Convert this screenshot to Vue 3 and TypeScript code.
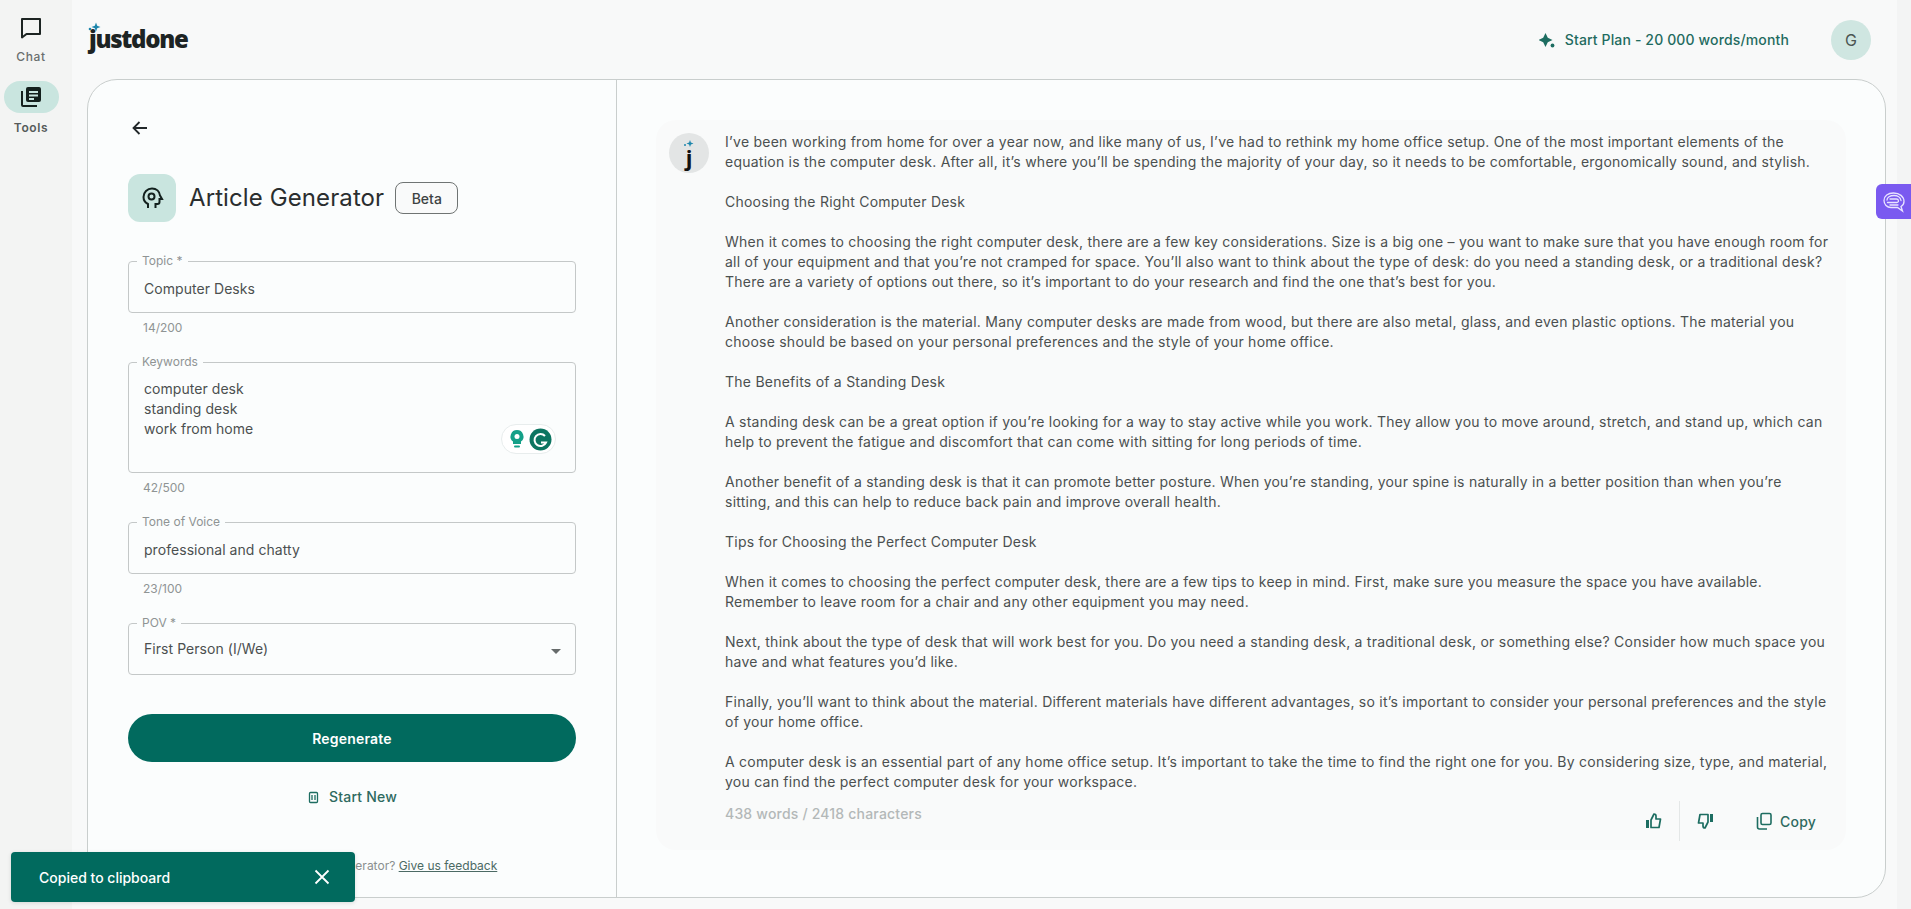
<script setup lang="ts">
const paragraphs: string[] = [
  'I’ve been working from home for over a year now, and like many of us, I’ve had to rethink my home office setup. One of the most important elements of the equation is the computer desk. After all, it’s where you’ll be spending the majority of your day, so it needs to be comfortable, ergonomically sound, and stylish.',
  'Choosing the Right Computer Desk',
  'When it comes to choosing the right computer desk, there are a few key considerations. Size is a big one – you want to make sure that you have enough room for all of your equipment and that you’re not cramped for space. You’ll also want to think about the type of desk: do you need a standing desk, or a traditional desk? There are a variety of options out there, so it’s important to do your research and find the one that’s best for you.',
  'Another consideration is the material. Many computer desks are made from wood, but there are also metal, glass, and even plastic options. The material you choose should be based on your personal preferences and the style of your home office.',
  'The Benefits of a Standing Desk',
  'A standing desk can be a great option if you’re looking for a way to stay active while you work. They allow you to move around, stretch, and stand up, which can help to prevent the fatigue and discomfort that can come with sitting for long periods of time.',
  'Another benefit of a standing desk is that it can promote better posture. When you’re standing, your spine is naturally in a better position than when you’re sitting, and this can help to reduce back pain and improve overall health.',
  'Tips for Choosing the Perfect Computer Desk',
  'When it comes to choosing the perfect computer desk, there are a few tips to keep in mind. First, make sure you measure the space you have available. Remember to leave room for a chair and any other equipment you may need.',
  'Next, think about the type of desk that will work best for you. Do you need a standing desk, a traditional desk, or something else? Consider how much space you have and what features you’d like.',
  'Finally, you’ll want to think about the material. Different materials have different advantages, so it’s important to consider your personal preferences and the style of your home office.',
  'A computer desk is an essential part of any home office setup. It’s important to take the time to find the right one for you. By considering size, type, and material, you can find the perfect computer desk for your workspace.',
]
</script>

<template>
  <div class="app">
    <nav class="rail">
      <div class="rail-item">
        <span class="rail-icon">
          <svg width="24" height="24" viewBox="0 0 24 24" fill="none" stroke="#1c2422" stroke-width="2" stroke-linejoin="round"><path d="M3 3h18v15H7.500L3 21.500z" /></svg>
        </span>
        <span class="rail-label">Chat</span>
      </div>
      <div class="rail-item tools">
        <span class="rail-icon active">
          <svg width="24" height="24" viewBox="0 0 24 24"><path fill="#14201d" d="M9 2h11a2 2 0 0 1 2 2v11a2 2 0 0 1-2 2H9a2 2 0 0 1-2-2V4a2 2 0 0 1 2-2z" /><path fill="#c9e5df" d="M10 6h9v2h-9zM10 9.500h9v2h-9zM10 13h5v2h-5z" /><path fill="none" stroke="#14201d" stroke-width="2" d="M3 6v14a1 1 0 0 0 1 1h14" /></svg>
        </span>
        <span class="rail-label strong">Tools</span>
      </div>
    </nav>

    <main class="main">
      <header class="top">
        <div class="logo">
          <svg class="spark" width="14" height="14" viewBox="0 0 14 14"><path fill="#1d86ac" d="M8 0.500l1.200 3.300 3.300 1.200-3.300 1.200L8 9.500 6.800 6.200 3.500 5l3.300-1.200z" /><circle cx="2" cy="7" r="1.300" fill="#1d86ac" /></svg>
          <span>justdone</span>
        </div>
        <div class="plan">
          <svg width="16" height="16" viewBox="0 0 16 16" fill="#1d6d61"><path d="M6.500 1l2.300 4.700 4.700 2.300-4.700 2.300-2.300 4.700-2.300-4.700L-.5 8l4.700-2.300z" /><circle cx="13.500" cy="13.500" r="1.900" /></svg>
          <span>Start Plan - 20 000 words/month</span>
        </div>
        <div class="avatar">G</div>
      </header>

      <section class="card">
        <aside class="form">
          <svg class="back" width="18" height="18" viewBox="0 0 18 18" fill="none" stroke="#22282a" stroke-width="1.800"><path d="M16 9H2.500M8.500 3 2.500 9l6 6" /></svg>

          <div class="title-row">
            <span class="tile">
              <svg width="24" height="24" viewBox="0 0 24 24" fill="none" stroke="#13211e" stroke-width="2"><path d="M8 22v-4C5 16.500 3.500 14 3.500 11A8.500 8.500 0 0 1 12 2.500c4.500 0 7.500 3 8 7l2 3.500h-2.500v3a2 2 0 0 1-2 2h-2v4" /><circle cx="11.500" cy="10.500" r="3" /></svg>
            </span>
            <h1>Article Generator</h1>
            <span class="beta">Beta</span>
          </div>

          <fieldset class="field">
            <legend>Topic *</legend>
            <div class="value">Computer Desks</div>
          </fieldset>
          <div class="count">14/200</div>

          <fieldset class="field tall">
            <legend>Keywords</legend>
            <div class="value">computer desk<br />standing desk<br />work from home</div>
            <span class="assist">
              <svg width="18" height="20" viewBox="0 0 18 20"><path fill="#14a088" d="M9 1a6.500 6.500 0 0 1 4 11.600V15H5v-2.400A6.500 6.500 0 0 1 9 1z" /><rect x="6" y="16.500" width="6" height="2" rx="1" fill="#14a088" /><circle cx="9" cy="7.500" r="2.500" fill="#fff" /></svg>
              <svg width="23" height="23" viewBox="0 0 23 23"><circle cx="11.500" cy="11.500" r="11" fill="#0c7561" /><path fill="none" stroke="#fff" stroke-width="2" d="M16 8a6 6 0 1 0 1 6.500h-5" /></svg>
            </span>
          </fieldset>
          <div class="count">42/500</div>

          <fieldset class="field">
            <legend>Tone of Voice</legend>
            <div class="value">professional and chatty</div>
          </fieldset>
          <div class="count">23/100</div>

          <fieldset class="field select">
            <legend>POV *</legend>
            <div class="value">First Person (I/We)</div>
            <span class="caret"></span>
          </fieldset>

          <button class="primary" type="button">Regenerate</button>

          <div class="start-new">
            <svg width="13" height="13" viewBox="0 0 13 13" fill="none" stroke="#1d6d61" stroke-width="1.300"><rect x="2.500" y="1.500" width="8" height="10" rx="1" /><path d="M5 4v5M8 4v5" /></svg>
            <span>Start New</span>
          </div>

          <p class="feedback">Do you enjoy our Article Generator? <a>Give us feedback</a></p>
        </aside>

        <section class="output">
          <article class="bubble">
            <span class="bot">
              <svg width="12" height="10" viewBox="0 0 12 10" class="bot-spark"><path fill="#1d86ac" d="M7 0l.9 2.600 2.600.9-2.600.9L7 7l-.9-2.600-2.600-.9 2.600-.9z" /><circle cx="2" cy="5" r="1" fill="#1d86ac" /></svg>
              <span>j</span>
            </span>
            <div class="copy-body">
              <p v-for="(text, index) in paragraphs" :key="index">{{ text }}</p>
              <div class="stats">438 words / 2418 characters</div>
            </div>
            <div class="actions">
              <svg width="18" height="18" viewBox="0 0 18 18" fill="none" stroke="#1d6d61" stroke-width="1.700"><path fill="#1d6d61" stroke="none" d="M1 8h3v8H1z" /><path d="M6 8l3-6c1.500 0 2 1 2 2v3h4.500l-1.500 8.500H6z" stroke-linejoin="round" /></svg>
              <i class="sep"></i>
              <svg width="18" height="18" viewBox="0 0 18 18" fill="none" stroke="#1d6d61" stroke-width="1.700"><path fill="#1d6d61" stroke="none" d="M14 2h3v8h-3z" /><path d="M12 10l-3 6c-1.500 0-2-1-2-2v-3H2.500L4 2.500h8z" stroke-linejoin="round" /></svg>
              <span class="copy">
                <svg width="16" height="18" viewBox="0 0 16 18" fill="none" stroke="#1d6d61" stroke-width="1.600"><rect x="5" y="1.500" width="10" height="11" rx="1.500" /><path d="M1.500 5v10a2 2 0 0 0 2 2H11" /></svg>
                <span>Copy</span>
              </span>
            </div>
          </article>
        </section>
      </section>
    </main>

    <div class="strip"></div>

    <div class="side-tab">
      <svg width="24" height="22" viewBox="0 0 24 22" fill="none" stroke="#e9e4ff" stroke-width="1.300" stroke-linecap="round"><path d="M2 9.500C2 5 6 2 11.500 2 17.500 2 22 5.500 22 10.500c0 2.500-1 4-3 5l1.500 4.500-5-3.500H9C5 16.500 2 13.500 2 9.500z" /><path d="M5 9c0-2.500 3-4.500 7-4.500 3.500 0 6.500 2 7 5M5.500 11.500H15c2 0 2-3.500-.500-3.500H8M8 14h8" /></svg>
    </div>

    <div class="toast">
      <span>Copied to clipboard</span>
      <svg width="16" height="16" viewBox="0 0 16 16" stroke="#fff" stroke-width="1.800"><path d="M1.500 1.500l13 13M14.500 1.500l-13 13" /></svg>
    </div>
  </div>
</template>

<style>
html, body { margin: 0; height: 100%; overflow: hidden; }
</style>

<style scoped>
.app {
  display: grid;
  grid-template-columns: 72px 1fr 14px;
  height: 909px;
  font-family: Inter, "Liberation Sans", sans-serif;
  font-size: 14px;
  color: #4b5050;
  background: #f8f9f9;
}
.rail { background: #f3f4f3; display: flex; flex-direction: column; align-items: center; padding: 12px 10px 0 0; }
.strip { background: #f3f4f4; }
.rail-item { display: flex; flex-direction: column; align-items: center; }
.rail-item.tools { margin-top: 16px; }
.rail-icon { width: 55px; height: 32px; display: flex; align-items: center; justify-content: center; border-radius: 16px; }
.rail-icon.active { background: #c9e5df; }
.rail-label { font-size: 12px; line-height: 16px; margin-top: 5px; color: #6a6f6e; letter-spacing: 0.6px; font-weight: 500; }
.tools .rail-label { margin-top: 7px; }
.rail-label.strong { font-weight: 600; color: #565b5a; }

.main { padding: 0 11px 0 15px; display: flex; flex-direction: column; min-width: 0; }
.top { height: 79px; flex: none; display: flex; align-items: center; }
.logo {
  position: relative;
  font-family: "Open Sans", sans-serif;
  font-weight: 800;
  font-size: 24px;
  letter-spacing: -1.300px;
  color: #1d2424;
  margin: 1px auto 0 2px;
  padding-bottom: 3px;
}
.spark { position: absolute; left: -1px; top: 0; }
.plan { display: flex; align-items: center; gap: 10px; color: #1f6b60; font-weight: 500; font-size: 14px; letter-spacing: 0.14px; margin-right: 42px; }
.avatar { width: 40px; height: 40px; border-radius: 50%; background: #cfe6e1; color: #4b5553; display: flex; align-items: center; justify-content: center; font-size: 16px; margin-right: 15px; }

.card {
  height: 819px;
  box-sizing: border-box;
  display: grid;
  grid-template-columns: 529px 1fr;
  border: 1px solid #c9cecd;
  border-radius: 30px;
  background: #fbfdfd;
}
.form { padding: 39px 40px 0; border-right: 1px solid #c9cecd; min-width: 0; }
.back { display: block; margin-left: 3px; }
.title-row { display: flex; align-items: center; margin-top: 37px; }
.tile { width: 48px; height: 48px; border-radius: 12px; background: #c9e5df; display: flex; align-items: center; justify-content: center; }
h1 { margin: 0 0 0 13px; font-size: 24px; font-weight: 400; line-height: 32px; color: #2a2e2f; letter-spacing: 0.1px; }
.beta { margin-left: 11px; width: 63px; height: 32px; box-sizing: border-box; border: 1px solid #6f7473; border-radius: 8px; display: flex; align-items: center; justify-content: center; color: #3d4242; font-weight: 500; font-size: 14px; background: #f9fafa; }

.field { position: relative; margin: 32px 0 0; padding: 0 15px; height: 59px; box-sizing: border-box; border: 1px solid #c4c8c8; border-radius: 4px; min-width: 0; }
.count + .field { margin-top: 19px; }
.title-row + .field { margin-top: 32px; }
.field.tall { height: 118px; }
.field legend { font-size: 12px; line-height: 14px; padding: 0 5px; margin-left: -7px; color: #8f9494; }
.value { font-size: 14px; line-height: 20px; letter-spacing: 0.05px; color: #4b5050; padding-top: 11px; }
.tall .value { padding-top: 10px; }
.select .value { padding-top: 9px; }
.count { font-size: 12px; line-height: 16px; color: #8f9494; margin: 7px 0 0 15px; }
.assist { position: absolute; right: 19px; top: 55px; width: 55px; height: 30px; box-sizing: border-box; border: 1px solid #e8eded; border-radius: 15px; background: #fff; display: flex; align-items: center; justify-content: space-between; padding: 0 3px 0 6px; }
.caret { position: absolute; right: 14px; top: 19px; border-left: 5px solid transparent; border-right: 5px solid transparent; border-top: 5px solid #666b6b; }

.primary { display: block; width: 100%; height: 48px; margin-top: 39px; border: 0; border-radius: 24px; background: #016a5e; color: #fff; font: 600 14px Inter, sans-serif; letter-spacing: 0.2px; }
.start-new { display: flex; align-items: center; justify-content: center; gap: 9px; margin-top: 25px; line-height: 20px; color: #2e6a60; font-weight: 500; letter-spacing: 0.2px; }
.feedback { margin: 51px 0 0; padding-right: 14px; font-size: 12px; line-height: 16px; color: #8a8f8f; text-align: center; white-space: nowrap; }
.feedback a { color: #4b6a64; text-decoration: underline; }

.output { padding: 40px 39px 0 39px; min-width: 0; }
.bubble { position: relative; display: grid; grid-template-columns: 40px 1fr; column-gap: 16px; height: 730px; box-sizing: border-box; padding: 13px 15.500px 0 13px; border-radius: 20px; background: #f9fafa; }
.bot { position: relative; width: 40px; height: 40px; border-radius: 50%; background: #e3e5e5; display: flex; align-items: flex-end; justify-content: center; font: 700 22px "Open Sans", sans-serif; color: #111; line-height: 32px; }
.bot-spark { position: absolute; left: 14px; top: 7px; }
.copy-body p { margin: 0 0 20px; line-height: 20px; letter-spacing: 0.24px; color: #4b5050; }
.copy-body { margin-top: -1px; }
.stats { margin-top: -8px; font-weight: 500; color: #b3b8b8; line-height: 20px; letter-spacing: 0.2px; }
.actions { position: absolute; right: 30px; bottom: 9px; display: flex; align-items: center; color: #2e6a60; }
.sep { width: 1px; height: 40px; background: #e4e7e7; margin: 0 16px; }
.copy { display: flex; align-items: center; gap: 8px; margin-left: 42px; font-weight: 500; letter-spacing: 0.2px; }

.side-tab { position: absolute; left: 1876px; top: 184px; width: 35px; height: 35px; border-radius: 6px 0 0 6px; background: #7a5af0; display: flex; align-items: center; justify-content: center; }
.toast { position: absolute; left: 11px; top: 852px; width: 344px; height: 50px; box-sizing: border-box; padding: 0 25px 0 28px; border-radius: 4px; background: #016a5e; color: #fff; font-weight: 500; display: flex; align-items: center; justify-content: space-between; box-shadow: 0 1px 4px rgba(0,0,0,.12); }
</style>
